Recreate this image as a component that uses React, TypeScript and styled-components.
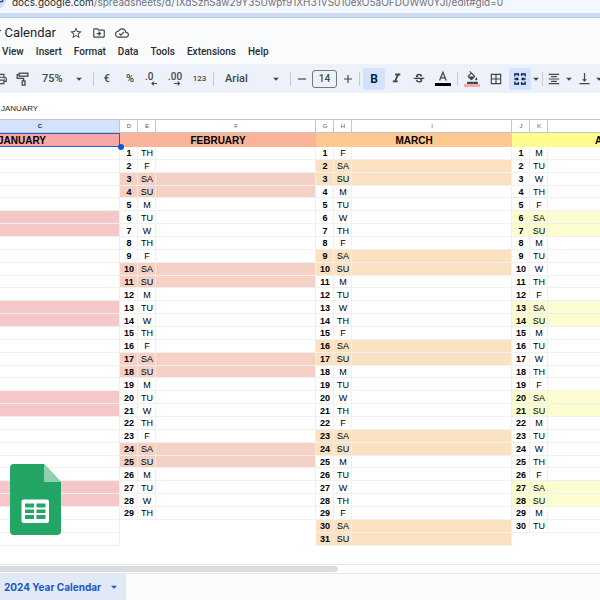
import React from "react";
import styled, { createGlobalStyle } from "styled-components";
import {
  MdArrowDropDown,
  MdFormatAlignCenter,
  MdFormatColorFill,
  MdFormatItalic,
  MdOutlineBorderAll,
  MdOutlineCloudDone,
  MdOutlineDriveFileMove,
  MdOutlinePrint,
  MdStarBorder,
  MdStrikethroughS,
  MdVerticalAlignBottom,
} from "react-icons/md";

const GlobalStyle = createGlobalStyle`
  *, *::before, *::after { box-sizing: border-box; }
  body { margin: 0; background: #fff; color: #1f1f1f; font-family: Roboto, "Liberation Sans", sans-serif; }
  button, input, select { font: inherit; color: inherit; border: 0; padding: 0; margin: 0; background: none; border-radius: 0; }
  svg { display: block; flex: none; }
`;

const Page = styled.div`
  min-height: 100vh;
  display: flex;
  flex-direction: column;
  overflow: hidden;
  background: #fff;
`;

const AddressBar = styled.div`
  height: 13px;
  display: flex;
  align-items: flex-end;
  overflow: hidden;
  background: #f4f7fd;
`;

const SiteBadge = styled.span`
  flex: none;
  width: 20px;
  height: 20px;
  margin: 0 6px 4px -14px;
  border-radius: 50%;
  background: #cddcf8;
  display: flex;
  align-items: center;
  justify-content: flex-end;
`;

const Url = styled.a`
  font-family: Inter, sans-serif;
  font-size: 10px;
  line-height: 14px;
  padding-bottom: 4px;
  white-space: nowrap;
  text-decoration: none;
  color: #70747a;
`;

const UrlHost = styled.span`
  color: #2c2e31;
`;

const BrowserEdge = styled.div`
  height: 5px;
  background: #cfdcf4;
  border-bottom: 1px solid #b1c3e6;
`;

const DocHeader = styled.header`
  background: #f9fbfd;
`;

const TitleRow = styled.div`
  display: flex;
  align-items: center;
  height: 24px;
  padding-top: 6px;
`;

const TitleBox = styled.div`
  width: 56px;
  overflow: hidden;
  display: flex;
  justify-content: flex-end;
`;

const DocTitle = styled.h1`
  margin: 0;
  font-size: 13px;
  font-weight: 400;
  line-height: 18px;
  white-space: nowrap;
`;

const TitleActions = styled.div`
  display: flex;
  gap: 9px;
  margin-left: 13px;
`;

const IconButton = styled.button`
  display: flex;
  align-items: center;
  justify-content: center;
  width: 14px;
  height: 14px;
  color: #444746;
`;

const MenuBar = styled.nav`
  display: flex;
  gap: 12px;
  height: 20px;
  align-items: center;
  padding-left: 2px;
  margin-bottom: 2px;
`;

const MenuItem = styled.button`
  font-size: 10px;
  line-height: 14px;
  font-weight: 500;
  color: #2b2c2e;
`;

const Toolbar = styled.div`
  display: flex;
  align-items: center;
  height: 29px;
  margin-left: -10px;
  background: #edf2fa;
  color: #444746;
`;

const Tool = styled.button<{ $w?: number; $active?: boolean; $size?: number }>`
  flex: none;
  width: ${(p) => p.$w ?? 22}px;
  height: 22px;
  display: flex;
  align-items: center;
  justify-content: center;
  font-size: ${(p) => p.$size ?? 11}px;
  font-weight: 500;
  border-radius: 2px;
  ${(p) => p.$active && "background: #d3e3fd; color: #041e49; margin-left: 2px;"}
`;

const BoldLetter = styled.b`
  font-size: 12px;
  font-weight: 700;
`;

const Separator = styled.span`
  flex: none;
  width: 1px;
  height: 14px;
  margin: 0 1px;
  background: #c7cbd1;
`;

const Picker = styled.label<{ $w: number; $pad: number }>`
  flex: none;
  width: ${(p) => p.$w}px;
  display: grid;
  align-items: center;
  padding-left: ${(p) => p.$pad}px;
  font-size: 11px;
  font-weight: 500;

  & > * {
    grid-area: 1 / 1;
  }
  & > svg {
    justify-self: end;
    margin-right: 6px;
    pointer-events: none;
  }
`;

const PickerSelect = styled.select`
  appearance: none;
  width: 100%;
  height: 22px;
`;

const SizeInput = styled.input`
  flex: none;
  width: 25px;
  height: 18px;
  border: 1px solid #747775;
  border-radius: 3px;
  text-align: center;
  font-size: 10px;
  font-weight: 500;
`;

const FormulaInput = styled.input`
  width: 100%;
  height: 26px;
  padding: 4px 0 0 1px;
  font-family: "Liberation Sans", Arial, sans-serif;
  font-size: 8px;
  color: #1f1f1f;
  background: #fff;
  outline: none;
`;

const SheetArea = styled.main`
  position: relative;
  flex: 1;
  overflow: hidden;
  padding-bottom: 18px;
`;

const Grid = styled.table`
  table-layout: fixed;
  width: 784px;
  height: 427px;
  margin-left: -76px;
  border-collapse: separate;
  border-spacing: 0;
  font-family: "Liberation Sans", Arial, sans-serif;
  color: #000;
`;

const Col = styled.col<{ $w: number }>`
  width: ${(p) => p.$w}px;
`;

const ColumnLetter = styled.th<{ $selected?: boolean }>`
  height: 14px;
  padding: 0 0 0 1px;
  font-size: 6px;
  line-height: 8px;
  font-weight: ${(p) => (p.$selected ? 700 : 400)};
  color: ${(p) => (p.$selected ? "#0b2a63" : "#575b5f")};
  background: ${(p) => (p.$selected ? "#d3e3fd" : "#fff")};
  border: solid #c4c7c9;
  border-width: 1px 1px 1px 0;
`;

const MonthHead = styled.th<{ $bg: string; $selected?: boolean }>`
  height: 14px;
  padding: 1px 0 0;
  position: relative;
  font-size: 10px;
  line-height: 12px;
  background: ${(p) => p.$bg};
  box-shadow: ${(p) => (p.$selected ? "inset 0 0 0 1px #1f62cf" : "none")};
`;

const FillHandle = styled.span`
  position: absolute;
  z-index: 1;
  right: -4px;
  bottom: -3px;
  width: 6px;
  height: 6px;
  border-radius: 50%;
  background: #0b57d0;
`;

const Cell = styled.td<{ $bg?: string; $bold?: boolean; $empty?: boolean }>`
  padding: 1px 0 0 1px;
  text-align: center;
  font-size: 9px;
  line-height: 10px;
  font-weight: ${(p) => (p.$bold ? 700 : 400)};
  background: ${(p) => p.$bg ?? "#fff"};
  background-clip: padding-box;
  border: solid ${(p) => (p.$empty ? "transparent" : "#f0f0f1")};
  border-width: 0 1px 1px 0;
`;

const SheetsLogo = styled.svg`
  position: absolute;
  left: 10px;
  bottom: 29px;
`;

const ScrollTrack = styled.div`
  height: 10px;
  border: solid #e4e6e9;
  border-width: 1px 0;
  padding: 1px 0;
  background: #fff;
`;

const ScrollThumb = styled.div`
  width: 338px;
  height: 6px;
  border-radius: 0 3px 3px 0;
  background: #dadce0;
`;

const TabBar = styled.footer`
  height: 26px;
  display: flex;
  background: #f9fbfd;
`;

const SheetTab = styled.button`
  display: flex;
  align-items: center;
  gap: 6px;
  padding: 0 5px 0 4px;
  background: #e1e9f7;
  color: #1a56c4;
  font-family: Inter, sans-serif;
  font-size: 10px;
  font-weight: 700;
`;

const Caret = () => <MdArrowDropDown size={14} />;

const PaintRoller = () => (
  <svg width="14" height="14" viewBox="0 0 14 14" fill="none" stroke="currentColor" strokeWidth="1.3">
    <rect x="3.2" y="1.2" width="8.6" height="3" />
    <path d="M3.2 2.7H1.2V6.4H7.6V9" />
    <rect x="6.2" y="9" width="2.8" height="4.2" />
  </svg>
);

const Decimals = ({ digits, more }: { digits: string; more?: boolean }) => (
  <svg width="16" height="16" viewBox="0 0 16 16" fill="none" stroke="currentColor" strokeWidth="1.1">
    <text x="1" y="9" fontSize="10" fontWeight="500" fill="currentColor" stroke="none" fontFamily="Roboto, sans-serif">
      {digits}
    </text>
    {more ? <path d="M7 12.5H12.5M10.7 10.7L12.5 12.5L10.7 14.3" /> : <path d="M13 12.5H8M9.8 10.7L8 12.5L9.8 14.3" />}
  </svg>
);

const TextColor = () => (
  <svg width="18" height="18" viewBox="0 0 18 18">
    <path d="M5.6 10.5L8.9 2.3L12.2 10.5M6.8 7.8H11" fill="none" stroke="currentColor" strokeWidth="1.3" />
    <rect x="1" y="13" width="16" height="3" fill="#000" />
  </svg>
);

const FillColor = styled.span`
  display: flex;
  flex-direction: column;
  align-items: center;

  &::after {
    content: "";
    width: 16px;
    height: 3px;
    background: #f4a9a8;
  }
`;

const MergeCells = () => (
  <svg width="14" height="14" viewBox="0 0 14 14" fill="none" stroke="currentColor" strokeWidth="1.3">
    <path d="M5.4 3.9V2H1.9V4.6M1.9 9.4V12H5.4V10.1M8.6 3.9V2H12.1V4.6M12.1 9.4V12H8.6V10.1" />
    <path d="M1.3 7H4.6M9.4 7H12.7" />
    <path d="M3.6 4.9L6 7L3.6 9.1ZM10.4 4.9L8 7L10.4 9.1Z" fill="currentColor" stroke="none" />
  </svg>
);

const Stepper = ({ plus }: { plus?: boolean }) => (
  <svg width="8" height="8" viewBox="0 0 8 8" stroke="currentColor" strokeWidth="1.2">
    <path d={plus ? "M0 4H8M4 0V8" : "M0 4H8"} />
  </svg>
);

const WEEK = ["M", "TU", "W", "TH", "F", "SA", "SU"];

const MONTHS = [
  { name: "JANUARY", first: 0, days: 31, head: "#f7a8a6", tint: "#f6c7c9" },
  { name: "FEBRUARY", first: 3, days: 29, head: "#fab396", tint: "#f5d0c4" },
  { name: "MARCH", first: 4, days: 31, head: "#fdc98f", tint: "#f9e1c2" },
  { name: "APRIL", first: 0, days: 30, head: "#fdfd8f", tint: "#fcfdd0" },
];

const LETTERS = "ABCDEFGHIJKL".split("");
const DAYS = Array.from({ length: 31 }, (_, i) => i + 1);
const MENUS = ["View", "Insert", "Format", "Data", "Tools", "Extensions", "Help"];

export default function App() {
  return (
    <>
      <GlobalStyle />
      <Page>
        <AddressBar>
          <SiteBadge>
            <svg width="8" height="8" viewBox="0 0 8 8" fill="none" stroke="#33507f" strokeWidth="1.4">
              <circle cx="3" cy="5" r="1.8" />
            </svg>
          </SiteBadge>
          <Url href="#gid=0">
            <UrlHost>docs.google.com</UrlHost>
            /spreadsheets/d/1XdSzhSaw29Y35Uwpf91XH31VS010exO5aOFDUWw0YJl/edit#gid=0
          </Url>
        </AddressBar>
        <BrowserEdge />

        <DocHeader>
          <TitleRow>
            <TitleBox>
              <DocTitle>2024 Year Calendar</DocTitle>
            </TitleBox>
            <TitleActions>
              <IconButton aria-label="Star"><MdStarBorder size={14} /></IconButton>
              <IconButton aria-label="Move"><MdOutlineDriveFileMove size={14} /></IconButton>
              <IconButton aria-label="Document status"><MdOutlineCloudDone size={14} /></IconButton>
            </TitleActions>
          </TitleRow>
          <MenuBar>
            {MENUS.map((m) => <MenuItem key={m}>{m}</MenuItem>)}
          </MenuBar>
        </DocHeader>

        <Toolbar role="toolbar">
          <Tool aria-label="Print"><MdOutlinePrint size={14} /></Tool>
          <Tool aria-label="Paint format"><PaintRoller /></Tool>
          <Picker $w={58} $pad={8}>
            <PickerSelect aria-label="Zoom"><option>75%</option></PickerSelect>
            <Caret />
          </Picker>
          <Separator />
          <Tool $w={24}>€</Tool>
          <Tool>%</Tool>
          <Tool aria-label="Decrease decimal places"><Decimals digits=".0" /></Tool>
          <Tool $w={24} aria-label="Increase decimal places"><Decimals digits=".00" more /></Tool>
          <Tool $w={25} $size={8}>123</Tool>
          <Separator />
          <Picker $w={74} $pad={10}>
            <PickerSelect aria-label="Font"><option>Arial</option></PickerSelect>
            <Caret />
          </Picker>
          <Separator />
          <Tool $w={20} aria-label="Decrease font size"><Stepper /></Tool>
          <SizeInput aria-label="Font size" defaultValue="14" />
          <Tool $w={21} aria-label="Increase font size"><Stepper plus /></Tool>
          <Separator />
          <Tool $active aria-label="Bold"><BoldLetter>B</BoldLetter></Tool>
          <Tool aria-label="Italic"><MdFormatItalic size={15} /></Tool>
          <Tool $w={23} aria-label="Strikethrough"><MdStrikethroughS size={14} /></Tool>
          <Tool $w={26} aria-label="Text color"><TextColor /></Tool>
          <Separator />
          <Tool $w={26} aria-label="Fill color"><FillColor><MdFormatColorFill size={13} /></FillColor></Tool>
          <Tool aria-label="Borders"><MdOutlineBorderAll size={14} /></Tool>
          <Tool $active aria-label="Merge cells"><MergeCells /></Tool>
          <Tool $w={10} aria-label="Merge type"><Caret /></Tool>
          <Separator />
          <Tool $w={20} aria-label="Horizontal align"><MdFormatAlignCenter size={14} /></Tool>
          <Tool $w={10} aria-label="Horizontal align options"><Caret /></Tool>
          <Tool $w={20} aria-label="Vertical align"><MdVerticalAlignBottom size={15} /></Tool>
          <Tool $w={10} aria-label="Vertical align options"><Caret /></Tool>
        </Toolbar>

        <FormulaInput aria-label="Formula" defaultValue="JANUARY" />

        <SheetArea>
          <Grid>
            <colgroup>
              {MONTHS.map((m) => (
                <React.Fragment key={m.name}>
                  <Col $w={18} />
                  <Col $w={18} />
                  <Col $w={160} />
                </React.Fragment>
              ))}
            </colgroup>
            <thead>
              <tr>
                {LETTERS.map((l, i) => <ColumnLetter key={l} $selected={i < 3}>{l}</ColumnLetter>)}
              </tr>
              <tr>
                {MONTHS.map((m, i) => (
                  <MonthHead key={m.name} colSpan={3} $bg={m.head} $selected={i === 0}>
                    {m.name}
                    {i === 0 && <FillHandle />}
                  </MonthHead>
                ))}
              </tr>
            </thead>
            <tbody>
              {DAYS.map((d) => (
                <tr key={d}>
                  {MONTHS.map((m) => {
                    const empty = d > m.days;
                    const weekday = (m.first + d - 1) % 7;
                    const bg = !empty && weekday > 4 ? m.tint : undefined;
                    return (
                      <React.Fragment key={m.name}>
                        <Cell $bold $bg={bg} $empty={empty}>{empty ? "" : d}</Cell>
                        <Cell $bg={bg} $empty={empty}>{empty ? "" : WEEK[weekday]}</Cell>
                        <Cell $bg={bg} $empty={empty} />
                      </React.Fragment>
                    );
                  })}
                </tr>
              ))}
            </tbody>
          </Grid>
          <SheetsLogo width="51" height="71" viewBox="0 0 51 71" aria-label="Google Sheets">
            <path d="M4 0H34L51 18V67a4 4 0 0 1-4 4H4a4 4 0 0 1-4-4V4a4 4 0 0 1 4-4Z" fill="#22a565" />
            <path d="M34 0L51 18H34Z" fill="#8ed1b1" />
            <rect x="11.5" y="35.5" width="27.5" height="23.5" rx="2" fill="#fff" />
            <path d="M15 39.5H24V43.5H15ZM26.5 39.5H35.5V43.5H26.5ZM15 45.5H24V49H15ZM26.5 45.5H35.5V49H26.5ZM15 51H24V55H15ZM26.5 51H35.5V55H26.5Z" fill="#22a565" />
          </SheetsLogo>
        </SheetArea>

        <ScrollTrack><ScrollThumb /></ScrollTrack>
        <TabBar>
          <SheetTab>2024 Year Calendar<Caret /></SheetTab>
        </TabBar>
      </Page>
    </>
  );
}
